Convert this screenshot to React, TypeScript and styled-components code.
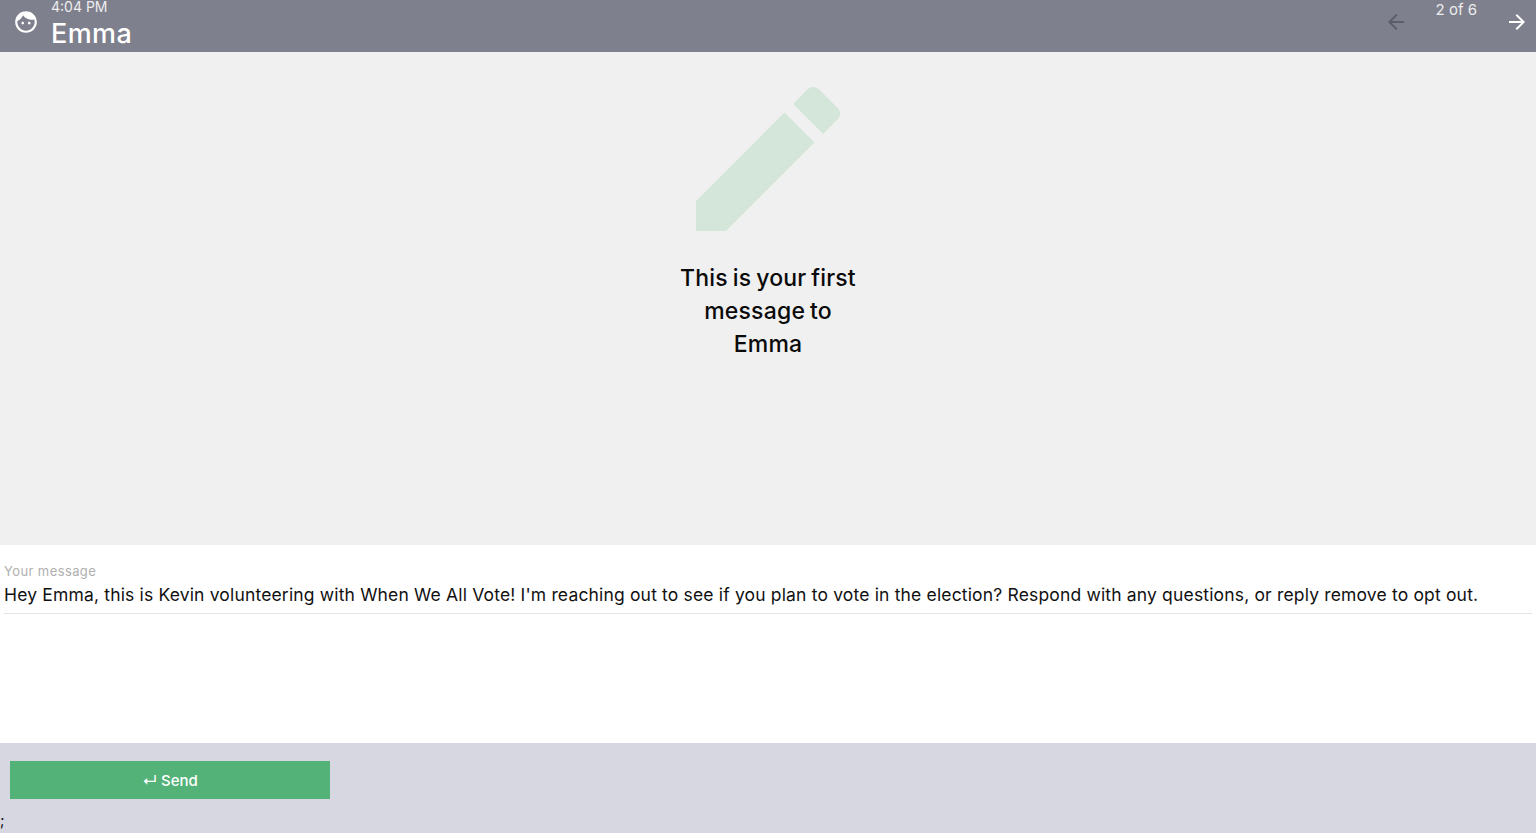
import React from 'react'
import styled, { createGlobalStyle } from 'styled-components'

const GlobalStyle = createGlobalStyle`
  html, body {
    margin: 0;
    padding: 0;
    height: 100%;
    overflow: hidden;
    font-family: Inter, "Open Sans", sans-serif;
  }
`

const Page = styled.div`
  display: flex;
  flex-direction: column;
  height: 833px;
  background: #f0f0f0;
`

const Header = styled.header`
  display: flex;
  align-items: flex-start;
  justify-content: space-between;
  flex: 0 0 52px;
  height: 52px;
  overflow: hidden;
  background: #7f808d;
  color: #fff;
`

const Contact = styled.div`
  display: flex;
  align-items: flex-start;
  gap: 12px;
  padding-left: 13px;
`

const FaceIcon = styled.svg`
  width: 26px;
  height: 26px;
  margin-top: 9px;
  fill: #fff;
`

const ContactText = styled.div`
  display: flex;
  flex-direction: column;
  margin-top: -3px;
`

const Time = styled.span`
  font-size: 14px;
  line-height: 20px;
  color: #eceded;
`

const Name = styled.span`
  font-size: 27px;
  line-height: 34px;
  font-weight: 500;
  letter-spacing: 0.4px;
`

const Pager = styled.div`
  display: flex;
  align-items: flex-start;
  gap: 28px;
  padding-right: 7px;
`

const PageCount = styled.span`
  font-size: 15px;
  line-height: 20px;
  color: #eceded;
`

const ArrowIcon = styled.svg<{ $muted?: boolean }>`
  width: 24px;
  height: 24px;
  margin-top: 10px;
  fill: ${p => (p.$muted ? '#5c5d69' : '#fff')};
`

const Thread = styled.main`
  flex: 1;
  display: flex;
  flex-direction: column;
  align-items: center;
  padding-top: 11px;
`

const PencilIcon = styled.svg`
  width: 192px;
  height: 192px;
  fill: #d4e5da;
`

const EmptyText = styled.h2`
  width: 200px;
  margin: 7px 0 0;
  font-size: 23px;
  line-height: 33px;
  font-weight: 500;
  letter-spacing: 0.2px;
  word-spacing: -1.5px;
  text-align: center;
  color: #0a0a0a;
`

const Composer = styled.section`
  flex: 0 0 198px;
  box-sizing: border-box;
  padding: 18px 4px 0;
  background: #fff;
`

const FieldLabel = styled.div`
  font-size: 13px;
  line-height: 16px;
  letter-spacing: 0.4px;
  color: #b0b0b0;
`

const MessageText = styled.div`
  padding: 3px 0 5px;
  font-size: 17.5px;
  line-height: 26px;
  letter-spacing: 0.165px;
  color: #111;
  border-bottom: 1px solid #e4e4e4;
  white-space: nowrap;
`

const Footer = styled.footer`
  flex: 0 0 90px;
  box-sizing: border-box;
  padding: 18px 0 0 10px;
  background: #d6d7e0;
`

const SendButton = styled.button`
  display: flex;
  align-items: center;
  justify-content: center;
  width: 320px;
  height: 38px;
  padding: 0;
  border: 0;
  background: #52b277;
  color: #fff;
  font-family: inherit;
  font-size: 15px;
  font-weight: 500;
`

const Stray = styled.div`
  margin: 13px 0 0 -10px;
  font-size: 15px;
  line-height: 18px;
  color: #111;
`

export default function App() {
  return (
    <Page>
      <GlobalStyle />
      <Header>
        <Contact>
          <FaceIcon viewBox="0 0 24 24">
            <path d="M9 11.75c-.69 0-1.25.56-1.25 1.25s.56 1.25 1.25 1.25 1.25-.56 1.25-1.25-.56-1.25-1.25-1.25zm6 0c-.69 0-1.25.56-1.25 1.25s.56 1.25 1.25 1.25 1.25-.56 1.25-1.25-.56-1.25-1.25-1.25zM12 2C6.48 2 2 6.48 2 12s4.48 10 10 10 10-4.48 10-10S17.52 2 12 2zm0 18c-4.41 0-8-3.59-8-8 0-.29.02-.58.05-.86 2.36-1.05 4.23-2.98 5.21-5.37C11.07 8.33 14.05 10 17.42 10c.78 0 1.53-.09 2.25-.26.21.71.33 1.47.33 2.26 0 4.41-3.59 8-8 8z" />
          </FaceIcon>
          <ContactText>
            <Time>4:04 PM</Time>
            <Name>Emma</Name>
          </ContactText>
        </Contact>
        <Pager>
          <ArrowIcon $muted viewBox="0 0 24 24">
            <path d="M20 11H7.83l5.59-5.59L12 4l-8 8 8 8 1.41-1.41L7.83 13H20v-2z" />
          </ArrowIcon>
          <PageCount>2 of 6</PageCount>
          <ArrowIcon viewBox="0 0 24 24">
            <path d="M12 4l-1.41 1.41L16.17 11H4v2h12.17l-5.58 5.59L12 20l8-8z" />
          </ArrowIcon>
        </Pager>
      </Header>
      <Thread>
        <PencilIcon viewBox="0 0 24 24">
          <path d="M3 17.25V21h3.75L17.81 9.94l-3.75-3.75L3 17.25zM20.71 7.04c.39-.39.39-1.02 0-1.41l-2.34-2.34a.9959.9959 0 0 0-1.41 0l-1.83 1.83 3.75 3.75 1.83-1.83z" />
        </PencilIcon>
        <EmptyText>This is your first message to Emma</EmptyText>
      </Thread>
      <Composer>
        <FieldLabel>Your message</FieldLabel>
        <MessageText>
          Hey Emma, this is Kevin volunteering with When We All Vote! I'm reaching out to see if you plan to vote in the election? Respond with any questions, or reply remove to opt out.
        </MessageText>
      </Composer>
      <Footer>
        <SendButton>↵ Send</SendButton>
        <Stray>;</Stray>
      </Footer>
    </Page>
  )
}
